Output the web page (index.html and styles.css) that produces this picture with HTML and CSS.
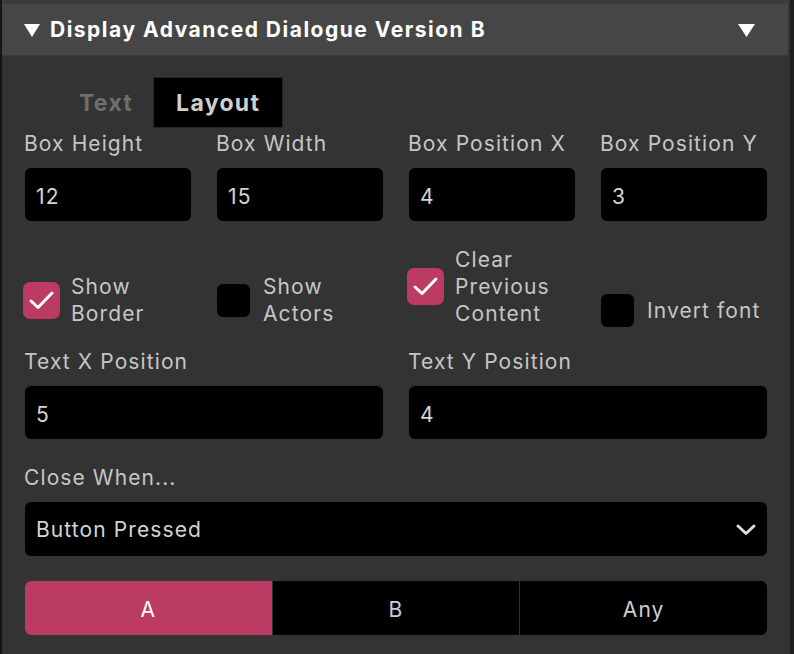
FILE: index.html
```html
<!DOCTYPE html>
<html>
<head>
<meta charset="utf-8">
<link rel="stylesheet" href="styles.css">
</head>
<body>
<div class="frame">
  <div class="edge-left"></div>
  <div class="panel">
    <div class="topstrip"></div>
    <div class="header">
      <svg class="tri" width="16" height="13" viewBox="0 0 16 13"><polygon points="0,0 16,0 8,13" fill="#ffffff"/></svg>
      <span class="title">Display Advanced Dialogue Version B</span>
      <svg class="tri tri-right" width="17" height="13" viewBox="0 0 17 13"><polygon points="0,0 17,0 8.5,13" fill="#ffffff"/></svg>
    </div>
    <div class="body">
      <div class="tabs">
        <div class="tab">Text</div>
        <div class="tab active">Layout</div>
      </div>

      <div class="grid4">
        <div class="field"><div class="label">Box Height</div><div class="input">12</div></div>
        <div class="field"><div class="label">Box Width</div><div class="input">15</div></div>
        <div class="field"><div class="label">Box Position X</div><div class="input">4</div></div>
        <div class="field"><div class="label">Box Position Y</div><div class="input">3</div></div>
      </div>

      <div class="grid4 checks">
        <div class="check">
          <div class="box on"><svg width="37" height="37" viewBox="0 0 37 37"><polyline points="8,19 15,25.5 29,11" fill="none" stroke="#fff" stroke-width="3" stroke-linecap="round" stroke-linejoin="round"/></svg></div>
          <div class="clabel">Show<br>Border</div>
        </div>
        <div class="check">
          <div class="box"></div>
          <div class="clabel">Show<br>Actors</div>
        </div>
        <div class="check">
          <div class="box on"><svg width="37" height="37" viewBox="0 0 37 37"><polyline points="8,19 15,25.5 29,11" fill="none" stroke="#fff" stroke-width="3" stroke-linecap="round" stroke-linejoin="round"/></svg></div>
          <div class="clabel">Clear<br>Previous<br>Content</div>
        </div>
        <div class="check">
          <div class="box"></div>
          <div class="clabel">Invert font</div>
        </div>
      </div>

      <div class="grid2">
        <div class="field"><div class="label">Text X Position</div><div class="input">5</div></div>
        <div class="field"><div class="label">Text Y Position</div><div class="input">4</div></div>
      </div>

      <div class="field close">
        <div class="label">Close When...</div>
        <div class="input select">
          <span>Button Pressed</span>
          <svg width="20" height="12" viewBox="0 0 20 12"><polyline points="2,2 10,9.5 18,2" fill="none" stroke="#dddddd" stroke-width="3" stroke-linecap="round" stroke-linejoin="round"/></svg>
        </div>
      </div>

      <div class="segmented">
        <div class="seg active">A</div>
        <div class="seg">B</div>
        <div class="seg">Any</div>
      </div>
    </div>
  </div>
  <div class="edge-right"></div>
</div>
</body>
</html>
```

FILE: styles.css
```css
* { box-sizing: border-box; }
html, body {
  margin: 0;
  padding: 0;
  width: 794px;
  height: 654px;
  overflow: hidden;
  background: #333333;
  font-family: Inter, "Noto Sans", "Liberation Sans", sans-serif;
}
.frame {
  display: flex;
  width: 794px;
  height: 654px;
}
.edge-left {
  width: 2px;
  background: #161616;
}
.edge-right {
  width: 4px;
  background: #1f1f1f;
}
.panel {
  flex: 1;
  display: flex;
  flex-direction: column;
  background: #333333;
}
.topstrip {
  height: 4px;
  background: #3c3c3c;
}
.header {
  height: 52px;
  background: #464646;
  margin-right: 2px;
  display: flex;
  align-items: center;
  padding-left: 22px;
  padding-right: 33px;
  border-bottom: 1px solid #3a3a3a;
}
.tri { display: block; margin-top: 2px; }
.title {
  margin-left: 10px;
  color: #ffffff;
  font-size: 21px;
  font-weight: 700;
  letter-spacing: 1.5px;
  flex: 1;
}
.body {
  padding: 21px 23px 0 22px;
  display: flex;
  flex-direction: column;
}
.tabs {
  display: flex;
  height: 51px;
  padding-left: 32px;
}
.tab {
  display: flex;
  align-items: center;
  justify-content: center;
  padding: 0 20px 0 23px;
  font-size: 23px;
  font-weight: 700;
  letter-spacing: 1.3px;
  color: #6e6e6e;
}
.tab.active {
  background: #000000;
  color: #cfcfcf;
  border: 1px solid #262626;
  padding: 0 22px;
}
.grid4 {
  display: grid;
  grid-template-columns: repeat(4, 1fr);
  column-gap: 25px;
}
.grid2 {
  display: grid;
  grid-template-columns: repeat(2, 1fr);
  column-gap: 25px;
  margin-top: 19px;
}
.field {
  display: flex;
  flex-direction: column;
}
.label {
  height: 32px;
  line-height: 32px;
  font-size: 21px;
  letter-spacing: 1.1px;
  color: #c6c6c6;
  margin-bottom: 8px;
  white-space: nowrap;
}
.input {
  height: 53px;
  margin-left: 1px;
  background: #000000;
  border-radius: 6px;
  display: flex;
  align-items: center;
  padding-left: 11px;
  padding-top: 3px;
  font-size: 21px;
  letter-spacing: 1.1px;
  color: #d4d4d4;
}
.checks {
  margin-top: 25px;
  align-items: end;
}
.check {
  display: flex;
  align-items: center;
}
.box {
  width: 33px;
  height: 33px;
  border-radius: 6px;
  background: #000000;
  flex: none;
  margin-left: 1px;
  margin-right: 13px;
}
.box.on {
  width: 37px;
  height: 37px;
  margin-left: -1px;
  margin-right: 11px;
  background: #bb3b62;
  border-radius: 7px;
}
.box svg { display: block; }
.clabel {
  font-size: 21px;
  letter-spacing: 1.1px;
  line-height: 27px;
  color: #c6c6c6;
  white-space: nowrap;
}
.close {
  margin-top: 23px;
}
.select {
  height: 54px;
  justify-content: space-between;
  padding-top: 1px;
  padding-right: 11px;
}
.select svg { display: block; }
.segmented {
  margin-top: 25px;
  margin-left: 1px;
  height: 54px;
  display: flex;
  background: #000000;
  border-radius: 6px;
  overflow: hidden;
}
.seg {
  flex: 1;
  display: flex;
  align-items: center;
  justify-content: center;
  padding-top: 3px;
  font-size: 21px;
  letter-spacing: 1.1px;
  color: #cfcfcf;
  border-left: 1px solid #333333;
}
.seg:first-child { border-left: none; }
.seg.active {
  background: #bb3b62;
  color: #ffffff;
}
```
